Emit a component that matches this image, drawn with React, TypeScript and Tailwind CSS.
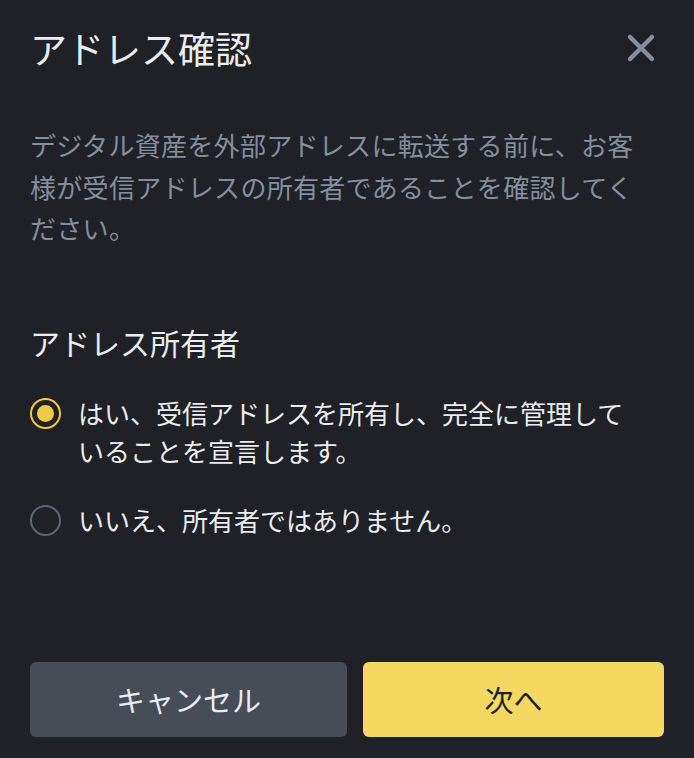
import { useState } from "react";

const font = { fontFamily: '"Noto Sans CJK JP", "Noto Sans", sans-serif' };

function Radio({ checked }: { checked: boolean }) {
  return (
    <span
      className={`mt-[4px] flex h-[31px] w-[31px] shrink-0 items-center justify-center rounded-full border-2 ${
        checked ? "border-[#f0c94a]" : "border-[#5e6673]"
      }`}
    >
      {checked && <span className="h-[17px] w-[17px] rounded-full bg-[#f0c94a]" />}
    </span>
  );
}

export default function App() {
  const [owner, setOwner] = useState<"yes" | "no">("yes");

  return (
    <div
      className="flex h-[758px] w-full flex-col bg-[#1f2126] pl-[30px] pr-[30px] text-[#eaecef]"
      style={font}
    >
      {/* header */}
      <div className="flex items-center justify-between pt-6">
        <h1 className="text-[37px] leading-[48px] font-normal">アドレス確認</h1>
        <button className="mr-[8px] text-[#848e9c]">
          <svg width="30" height="30" viewBox="0 0 30 30" fill="none">
            <path
              d="M4 4L26 26M26 4L4 26"
              stroke="currentColor"
              strokeWidth="4.5"
              strokeLinecap="round"
            />
          </svg>
        </button>
      </div>

      <p className="mt-[52px] w-[612px] text-[26px] leading-[41.5px] tracking-[0.3px] text-[#848e9c]">
        デジタル資産を外部アドレスに転送する前に、お客様が受信アドレスの所有者であることを確認してください。
      </p>

      <h2 className="mt-[73px] text-[30px] leading-[40px] font-normal">アドレス所有者</h2>

      <div className="mt-[32px] flex flex-col gap-[31px]">
        <label className="flex cursor-pointer gap-[17px]" onClick={() => setOwner("yes")}>
          <Radio checked={owner === "yes"} />
          <span className="w-[560px] text-[26px] leading-[38px]">
            はい、受信アドレスを所有し、完全に管理していることを宣言します。
          </span>
        </label>
        <label className="flex cursor-pointer gap-[17px]" onClick={() => setOwner("no")}>
          <Radio checked={owner === "no"} />
          <span className="text-[26px] leading-[38px]">いいえ、所有者ではありません。</span>
        </label>
      </div>

      {/* actions */}
      <div className="mt-auto mb-[21px] flex gap-4">
        <button className="h-[75px] w-[317px] rounded-md bg-[#474d57] text-[29px] font-normal text-[#eaecef]">
          キャンセル
        </button>
        <button className="h-[75px] flex-1 rounded-md bg-[#f4d862] text-[29px] font-normal text-[#1e2026]">
          次へ
        </button>
      </div>
    </div>
  );
}
